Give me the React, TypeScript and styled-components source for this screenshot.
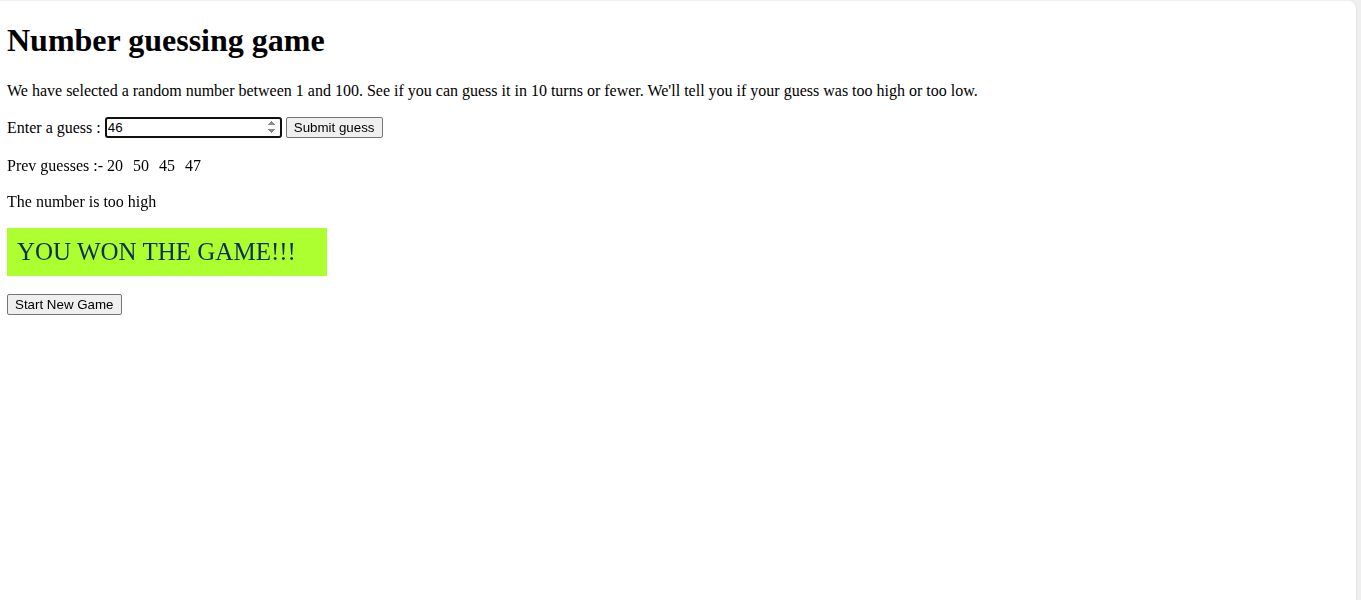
import React from "react";
import styled, { createGlobalStyle } from "styled-components";

const GlobalStyle = createGlobalStyle`
  html {
    background: #efefef;
  }
  body {
    margin: 0;
    font-family: "Liberation Serif", "Times New Roman", serif;
    font-size: 16px;
    color: #000;
  }
`;

const Card = styled.div`
  display: flow-root;
  background: #ffffff;
  margin: 1px 4px 0 0;
  padding: 0 7px;
  min-height: 599px;
  box-sizing: border-box;
  border-top-right-radius: 8px;
  border-right: 1px solid #e4e4e4;
`;

const Title = styled.h1`
  font-size: 32px;
  font-weight: bold;
  line-height: 36.8px;
  margin: 21.4px 0 21.8px;
`;

const Para = styled.p<{ $bottom?: number }>`
  margin: 16px 0 ${(p) => (p.$bottom ?? 16)}px;
  line-height: 20px;
`;

const FormRow = styled.div`
  margin: 15px 0 17px;
  height: 23px;
  display: flex;
  align-items: center;
`;

const Label = styled.label`
  margin-right: 4px;
  line-height: 20px;
  padding-top: 1px;
`;

const NumberInput = styled.input`
  width: 177px;
  height: 21px;
  box-sizing: border-box;
  font-family: "Liberation Sans", Arial, sans-serif;
  font-size: 13.33px;
  padding: 0 1px;
  border: 2px solid #101010;
  border-radius: 3px;
  outline: none;
  background: #fff;
  color: #000;
`;

const Button = styled.button`
  font-family: "Liberation Sans", Arial, sans-serif;
  font-size: 13.33px;
  padding: 1px 7px;
  background: #efefef;
  border: 1px solid #767676;
  border-radius: 2px;
  color: #000;
  height: 21px;
  box-sizing: border-box;
`;

const SubmitButton = styled(Button)`
  margin-left: 4px;
`;

const Guess = styled.span`
  margin-right: 10px;
`;

const WinBanner = styled.div`
  width: 300px;
  padding: 10px;
  background: #adff2f;
  color: #0d2f5a;
  font-size: 25px;
  line-height: 28px;
  margin: 16px 0 18px;
`;

export default function App() {
  const guesses = [20, 50, 45, 47];
  return (
    <>
      <GlobalStyle />
      <Card>
        <Title>Number guessing game</Title>
        <Para $bottom={0}>
          We have selected a random number between 1 and 100. See if you can guess it in 10 turns or
          fewer. We'll tell you if your guess was too high or too low.
        </Para>
        <FormRow>
          <Label htmlFor="guessField">Enter a guess :</Label>
          <NumberInput id="guessField" type="number" defaultValue={46} autoFocus />
          <SubmitButton>Submit guess</SubmitButton>
        </FormRow>
        <Para>
          Prev guesses :- {guesses.map((g) => (
            <Guess key={g}>{g}</Guess>
          ))}
        </Para>
        <Para $bottom={0}>The number is too high</Para>
        <WinBanner>YOU WON THE GAME!!!</WinBanner>
        <Button>Start New Game</Button>
      </Card>
    </>
  );
}
